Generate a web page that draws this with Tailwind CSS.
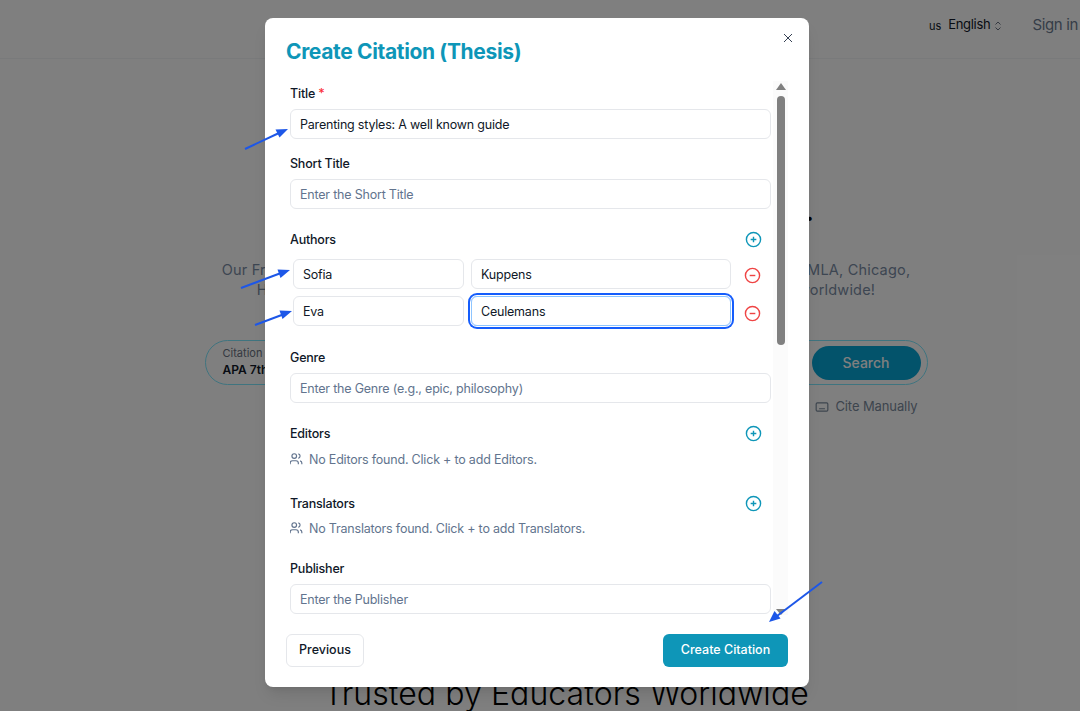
<!DOCTYPE html>
<html lang="en">
<head>
    <meta charset="UTF-8">
    <title>Create Citation</title>
    <script src="https://cdn.jsdelivr.net/npm/@tailwindcss/browser@4"></script>
</head>
<body class="bg-white text-black font-['Inter',sans-serif]">
<div class="relative h-[711px] w-[1080px] overflow-hidden">

    <!-- Page behind the modal -->
    <header class="h-[59px] border-b border-gray-100 flex justify-end items-start pt-[14px] pr-[2px]">
        <span class="text-[11px] text-gray-900 mt-[4px] mr-[7px]">us</span>
        <span class="text-[13px] tracking-[-0.3px] text-gray-900 leading-[20px]">English</span>
        <svg class="w-[12px] h-[12px] mt-[6px] ml-[2px] text-gray-500" viewBox="0 0 24 24" fill="none" stroke="currentColor" stroke-width="2"><path d="m7 15 5 5 5-5"/><path d="m7 9 5-5 5 5"/></svg>
        <span class="text-[15px] tracking-[-0.35px] text-[#6b7b90] ml-[28px] leading-[22px]">Sign in</span>
    </header>
    <main class="pl-[52px] flex flex-col items-center">
        <h1 class="mt-[129px] w-[496px] text-right text-[30px] leading-[44px] font-medium text-black whitespace-nowrap">Free Citation Generator.</h1>
        <p class="mt-[28px] w-[720px] text-center text-[14.5px] tracking-[0.2px] leading-[20px] text-[#7a8ca4] whitespace-nowrap">Our Free Citation Generator builds accurate, properly formatted references in APA, MLA, Chicago,<br>Harvard and many other styles, used by students and academic researchers worldwide!</p>
        <div class="mt-[40px] w-[723px] h-[45px] rounded-full border border-[#7ee8ff] flex items-center justify-between pl-[17px] pr-[6px]">
            <div>
                <div class="text-[11px] leading-[14px] text-gray-500">Citation Style</div>
                <div class="text-[12px] leading-[20px] font-semibold text-gray-900">APA 7th Edition</div>
            </div>
            <div class="w-[109px] h-[34px] rounded-full bg-[#07a6d6] text-white text-[14px] font-medium flex items-center justify-center">Search</div>
        </div>
        <div class="mt-[12px] w-[723px] pr-[10px] flex justify-end items-center gap-[6px] text-[13px] tracking-[-0.1px] text-[#7a8a9c]">
            <svg class="w-[14px] h-[14px]" viewBox="0 0 24 24" fill="none" stroke="currentColor" stroke-width="2"><rect x="2" y="5" width="20" height="14" rx="2"/><path d="M6 9h.01M10 9h.01M14 9h.01M18 9h.01M7 15h10"/></svg>
            <span>Cite Manually</span>
        </div>
        <h2 class="mt-[259px] text-[32px] tracking-[0.08px] leading-[36px] font-light whitespace-nowrap">Trusted by Educators Worldwide</h2>
    </main>

    <div class="absolute inset-0 bg-black/50"></div>

    <!-- Modal -->
    <div class="absolute left-[265px] top-[18px] w-[544px] h-[669px] bg-white rounded-lg shadow-lg flex flex-col">
        <button class="absolute right-[15px] top-[14px] text-gray-700">
            <svg class="w-[12px] h-[12px]" viewBox="0 0 24 24" fill="none" stroke="currentColor" stroke-width="2"><path d="M4 4l16 16M20 4 4 20"/></svg>
        </button>
        <h2 class="mt-[20px] ml-[21px] text-[21px] tracking-[-0.35px] leading-[28px] font-bold text-[#0e96b8]">Create Citation (Thesis)</h2>

        <div class="relative mt-[17px] ml-[25px] mr-[38px] h-[536px] overflow-hidden">
            <div class="flex flex-col">
                <label class="h-[20px] text-[12.5px] tracking-[-0.2px] leading-[22px] font-medium text-gray-900">Title <span class="text-red-500">*</span></label>
                <input class="mt-[6px] h-[30px] w-full border border-gray-200 rounded-md px-[9px] text-[12.5px] tracking-[-0.2px] text-gray-900" value="Parenting styles: A well known guide">

                <label class="mt-[14px] h-[20px] text-[12.5px] tracking-[-0.2px] leading-[22px] font-medium text-gray-900">Short Title</label>
                <input class="mt-[6px] h-[30px] w-full border border-gray-200 rounded-md px-[9px] text-[12.5px] tracking-[-0.2px] placeholder:text-slate-500" placeholder="Enter the Short Title">

                <div class="mt-[20px] flex items-center justify-between pr-[9px]">
                    <label class="h-[20px] text-[12.5px] tracking-[-0.2px] leading-[22px] font-medium text-gray-900">Authors</label>
                    <svg class="w-[17px] h-[17px] text-[#0e96b8]" viewBox="0 0 24 24" fill="none" stroke="currentColor" stroke-width="2"><circle cx="12" cy="12" r="10"/><path d="M8 12h8M12 8v8"/></svg>
                </div>
                <div class="mt-[10px] flex items-center pl-[3px]">
                    <input class="h-[30px] w-[171px] border border-gray-200 rounded-md px-[9px] text-[12.5px] tracking-[-0.2px] text-gray-900" value="Sofia">
                    <input class="ml-[7px] h-[30px] w-[260px] border border-gray-200 rounded-md px-[9px] text-[12.5px] tracking-[-0.2px] text-gray-900" value="Kuppens">
                    <svg class="ml-[13px] mt-[2px] w-[17px] h-[17px] text-[#ef4444]" viewBox="0 0 24 24" fill="none" stroke="currentColor" stroke-width="2"><circle cx="12" cy="12" r="10"/><path d="M8 12h8"/></svg>
                </div>
                <div class="mt-[7px] flex items-center pl-[3px]">
                    <input class="h-[30px] w-[171px] border border-gray-200 rounded-md px-[9px] text-[12.5px] tracking-[-0.2px] text-gray-900" value="Eva">
                    <input class="ml-[7px] h-[30px] w-[260px] border border-blue-300 ring-2 ring-blue-600 ring-offset-1 rounded-md px-[9px] text-[12.5px] tracking-[-0.2px] text-gray-900" value="Ceulemans">
                    <svg class="ml-[13px] mt-[4px] w-[17px] h-[17px] text-[#ef4444]" viewBox="0 0 24 24" fill="none" stroke="currentColor" stroke-width="2"><circle cx="12" cy="12" r="10"/><path d="M8 12h8"/></svg>
                </div>

                <label class="mt-[21px] h-[20px] text-[12.5px] tracking-[-0.2px] leading-[22px] font-medium text-gray-900">Genre</label>
                <input class="mt-[6px] h-[30px] w-full border border-gray-200 rounded-md px-[9px] text-[12.5px] tracking-[-0.2px] placeholder:text-slate-500" placeholder="Enter the Genre (e.g., epic, philosophy)">

                <div class="mt-[20px] flex items-center justify-between pr-[9px]">
                    <label class="h-[20px] text-[12.5px] tracking-[-0.2px] leading-[22px] font-medium text-gray-900">Editors</label>
                    <svg class="w-[17px] h-[17px] text-[#0e96b8]" viewBox="0 0 24 24" fill="none" stroke="currentColor" stroke-width="2"><circle cx="12" cy="12" r="10"/><path d="M8 12h8M12 8v8"/></svg>
                </div>
                <div class="mt-[6px] ml-[-1px] h-[20px] flex items-center gap-[6px] text-[12.5px] tracking-[-0.2px] leading-[22px] text-slate-500">
                    <svg class="w-[14px] h-[14px]" viewBox="0 0 24 24" fill="none" stroke="currentColor" stroke-width="2"><path d="M16 21v-2a4 4 0 0 0-4-4H6a4 4 0 0 0-4 4v2"/><circle cx="9" cy="7" r="4"/><path d="M22 21v-2a4 4 0 0 0-3-3.87"/><path d="M16 3.13a4 4 0 0 1 0 7.75"/></svg>
                    <span class="h-[20px]">No Editors found. Click + to add Editors.</span>
                </div>

                <div class="mt-[24px] flex items-center justify-between pr-[9px]">
                    <label class="h-[20px] text-[12.5px] tracking-[-0.2px] leading-[22px] font-medium text-gray-900">Translators</label>
                    <svg class="w-[17px] h-[17px] text-[#0e96b8]" viewBox="0 0 24 24" fill="none" stroke="currentColor" stroke-width="2"><circle cx="12" cy="12" r="10"/><path d="M8 12h8M12 8v8"/></svg>
                </div>
                <div class="mt-[5px] ml-[-1px] h-[20px] flex items-center gap-[6px] text-[12.5px] tracking-[-0.2px] leading-[22px] text-slate-500">
                    <svg class="w-[14px] h-[14px]" viewBox="0 0 24 24" fill="none" stroke="currentColor" stroke-width="2"><path d="M16 21v-2a4 4 0 0 0-4-4H6a4 4 0 0 0-4 4v2"/><circle cx="9" cy="7" r="4"/><path d="M22 21v-2a4 4 0 0 0-3-3.87"/><path d="M16 3.13a4 4 0 0 1 0 7.75"/></svg>
                    <span class="h-[20px]">No Translators found. Click + to add Translators.</span>
                </div>

                <label class="mt-[20px] h-[20px] text-[12.5px] tracking-[-0.2px] leading-[22px] font-medium text-gray-900">Publisher</label>
                <input class="mt-[6px] h-[30px] w-full border border-gray-200 rounded-md px-[9px] text-[12.5px] tracking-[-0.2px] placeholder:text-slate-500" placeholder="Enter the Publisher">
            </div>
        </div>

        <!-- Scrollbar -->
        <div class="absolute left-[508px] top-[63px] w-[15px] h-[534px] bg-[#fbfbfb] flex flex-col items-center">
            <div class="mt-[2px] w-0 h-0 border-x-[5px] border-x-transparent border-b-[7px] border-b-[#808080]"></div>
            <div class="mt-[6px] w-[8px] h-[249px] rounded-full bg-[#808080]"></div>
            <div class="mt-auto w-0 h-0 border-x-[5px] border-x-transparent border-t-[6px] border-t-[#808080]"></div>
        </div>

        <div class="mt-auto mb-[20px] mx-[21px] flex justify-between">
            <button class="h-[33px] w-[78px] border border-gray-200 rounded-md text-[12.5px] font-medium text-gray-900">Previous</button>
            <button class="h-[33px] w-[125px] rounded-md bg-[#0e96b8] text-[12.5px] font-medium text-white">Create Citation</button>
        </div>
    </div>

    <!-- Annotation arrows -->
    <svg class="absolute inset-0" width="1080" height="711" viewBox="0 0 1080 711" fill="#1d57e8" stroke="none">
        <path d="M245 149 L279 133" stroke="#1d57e8" stroke-width="2"/><path d="M288 129 L275.5 129.5 L279.5 137.5 Z"/>
        <path d="M241 288 L281 273" stroke="#1d57e8" stroke-width="2"/><path d="M290 270 L277.5 269.5 L280.5 278 Z"/>
        <path d="M255 325 L283 314.5" stroke="#1d57e8" stroke-width="2"/><path d="M292 311 L279.5 310.5 L282.5 319 Z"/>
        <path d="M822 582 L777 616" stroke="#1d57e8" stroke-width="2"/><path d="M769 622 L774.5 611 L780.5 618.5 Z"/>
    </svg>
</div>
</body>
</html>
